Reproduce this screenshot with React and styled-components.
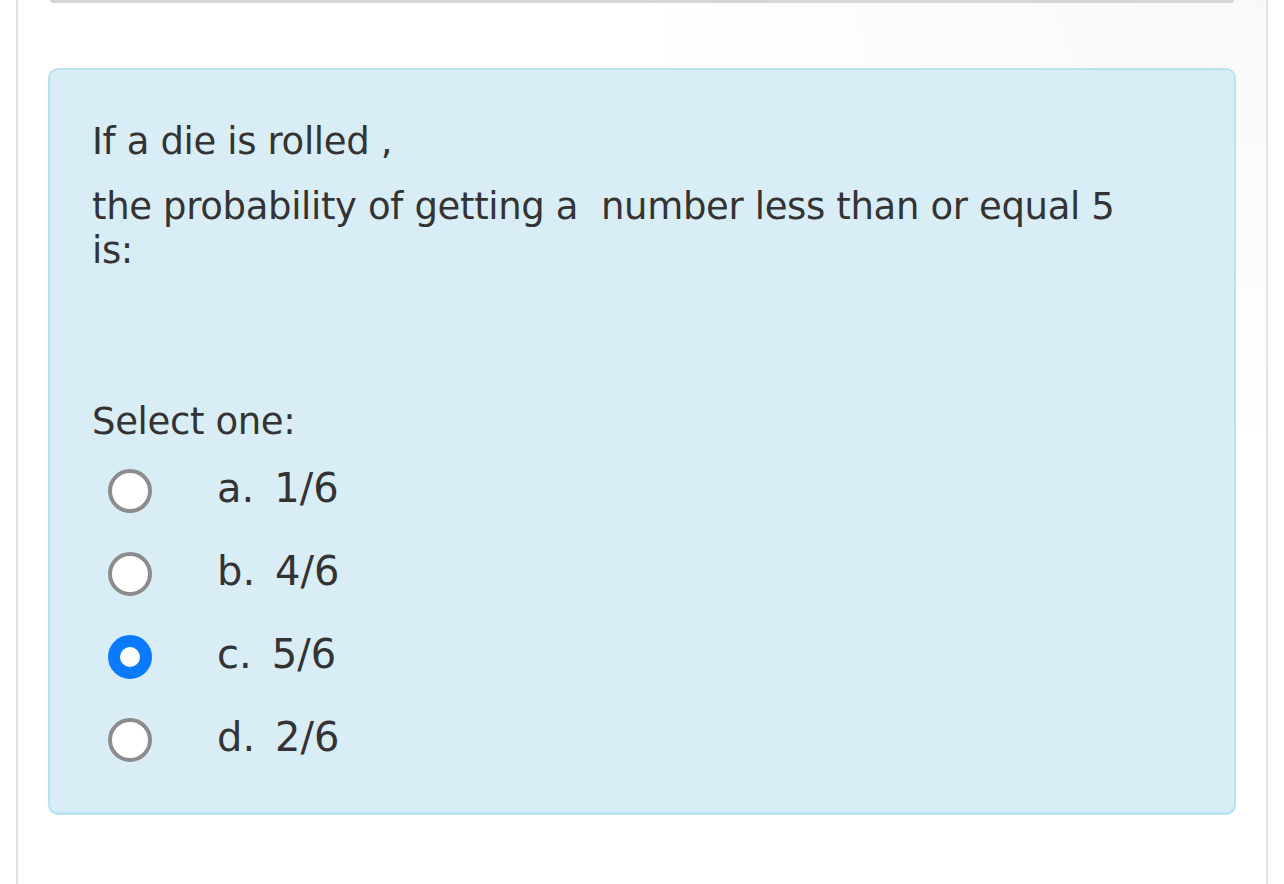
import React from 'react';
import styled, { createGlobalStyle } from 'styled-components';

const GlobalStyle = createGlobalStyle`
	html, body {
		margin: 0;
		padding: 0;
		background: #fff;
	}
	body {
		font-family: "DejaVu Sans", Verdana, sans-serif;
		color: #333;
	}
`;

const options = [
	{ id: 'a', label: '1/6', checked: false },
	{ id: 'b', label: '4/6', checked: false },
	{ id: 'c', label: '5/6', checked: true },
	{ id: 'd', label: '2/6', checked: false },
];

function App() {
	return (
		<>
			<GlobalStyle />
			<Page>
				<PrevCard />
				<Formulation>
					<QText>
						<Para>If a die is rolled ,</Para>
						<Para>the probability of getting a&nbsp; number less than or equal 5 is:</Para>
					</QText>
					<Prompt>Select one:</Prompt>
					<Answers>
						{options.map((opt) => (
							<Option key={opt.id}>
								<Radio checked={opt.checked} />
								<AnswerNumber>{opt.id}.</AnswerNumber>
								<AnswerText>{opt.label}</AnswerText>
							</Option>
						))}
					</Answers>
				</Formulation>
			</Page>
		</>
	);
}

const Page = styled.div`
	box-sizing: border-box;
	min-height: 100vh;
	margin: 0 16px;
	padding: 0 30px;
	border-left: 2px solid #e3e3e3;
	border-right: 2px solid #e3e3e3;
	background: radial-gradient(ellipse at 100% 0%, #f8f8f8 0%, #ffffff 35%);
`;

const PrevCard = styled.div`
	height: 3px;
	margin: 0 2px;
	background: #d6d6d6;
	border-radius: 0 0 4px 4px;
`;

const Formulation = styled.div`
	box-sizing: border-box;
	height: 747px;
	margin-top: 65px;
	padding: 50px 90px 0 42px;
	background: #d9edf7;
	border: 2px solid #b8e2ef;
	border-bottom-width: 3px;
	border-radius: 10px;
	font-size: 37px;
	line-height: 44px;
	letter-spacing: -0.35px;
`;

const QText = styled.div`
	margin-bottom: 127px;
`;

const Para = styled.p`
	margin: 0 0 21px;
	&:last-child {
		margin-bottom: 0;
	}
`;

const Prompt = styled.div`
	margin-bottom: 22px;
`;

const Answers = styled.div`
	display: flex;
	flex-direction: column;
	gap: 36px;
	font-size: 40px;
	letter-spacing: 0;
`;

const Option = styled.div`
	display: flex;
	align-items: flex-start;
`;

const Radio = styled.span`
	box-sizing: border-box;
	flex: none;
	width: 44px;
	height: 44px;
	margin: 3px 0 0 16px;
	border-radius: 50%;
	background: #fff;
	border: ${(p) => (p.checked ? '12px solid #0a7aff' : '4px solid #8c8c8c')};
`;

const AnswerNumber = styled.span`
	margin-left: 65px;
`;

const AnswerText = styled.span`
	margin-left: 20px;
`;

export default App;
